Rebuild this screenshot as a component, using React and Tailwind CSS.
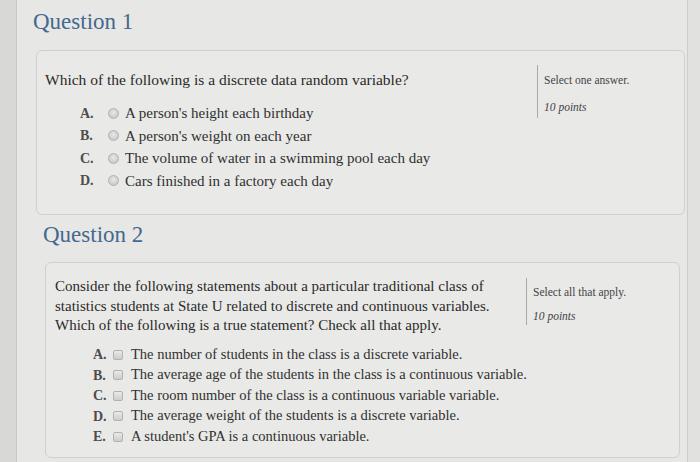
const q1Options = [
  { letter: 'A.', text: "A person's height each birthday" },
  { letter: 'B.', text: "A person's weight on each year" },
  { letter: 'C.', text: 'The volume of water in a swimming pool each day' },
  { letter: 'D.', text: 'Cars finished in a factory each day' },
];

const q2Options = [
  { letter: 'A.', text: 'The number of students in the class is a discrete variable.' },
  { letter: 'B.', text: 'The average age of the students in the class is a continuous variable.' },
  { letter: 'C.', text: 'The room number of the class is a continuous variable variable.' },
  { letter: 'D.', text: 'The average weight of the students is a discrete variable.' },
  { letter: 'E.', text: "A student's GPA is a continuous variable." },
];

function Radio() {
  return (
    <span className="inline-block w-[11px] h-[11px] rounded-full border border-[#b2b2b0] bg-[radial-gradient(circle_at_50%_40%,#e8e8e6_0%,#d2d2d0_55%,#bdbdbb_100%)] shrink-0" />
  );
}

function Check() {
  return (
    <span className="inline-block w-[10px] h-[10px] rounded-[2px] border border-[#b2b2b0] bg-[linear-gradient(#e9e9e7,#cdcdcb)] shrink-0" />
  );
}

function Side({ top, label, pt, gap, h }) {
  return (
    <div className={`border-l border-[#a9a9a7] pl-[6px] ${top} ${h}`}>
      <div className={`text-[11.5px] leading-[14px] text-[#444] ${pt}`}>{label}</div>
      <div className={`text-[11.5px] leading-[14px] italic text-[#444] ${gap}`}>10 points</div>
    </div>
  );
}

export default function App() {
  return (
    <div className="w-[700px] h-[462px] flex overflow-hidden bg-[#e4e4e2] font-['Liberation_Serif','Times_New_Roman',serif]">
      <div className="w-[17px] shrink-0 bg-[#d8d8d6] border-r border-[#c8c8c6]" />

      <div className="w-[670px] shrink-0 bg-[#e7e7e5] flex flex-col">
        {/* Question 1 */}
        <h2 className="pl-[16px] pt-[8px] text-[23px] leading-[28px] text-[#44698f]">Question 1</h2>
        <div className="mt-[14px] ml-[19px] w-[649px] h-[165px] shrink-0 rounded-[6px] border border-[#d0d0ce] bg-[#e9e9e7] flex">
          <div className="flex-1 min-w-0 pl-[8px] pt-[19px]">
            <div className="text-[15.5px] leading-[20px] text-[#2a2a2a] whitespace-nowrap">Which of the following is a discrete data random variable?</div>
            <div className="mt-[12px] pl-[35px] flex flex-col">
              {q1Options.map(o => (
                <div key={o.letter} className="flex items-center h-[22.5px] text-[15px] whitespace-nowrap">
                  <span className="w-[28px] shrink-0 font-bold text-[#4d4d4d] text-[14px]">{o.letter}</span>
                  <Radio />
                  <span className="ml-[6px] text-[#303030]">{o.text}</span>
                </div>
              ))}
            </div>
          </div>
          <div className="w-[147px] shrink-0">
            <Side top="mt-[14px]" h="h-[53px]" label="Select one answer." pt="pt-[8px]" gap="mt-[13px]" />
          </div>
        </div>

        {/* Question 2 */}
        <h2 className="pl-[26px] mt-[6px] text-[23px] leading-[28px] text-[#44698f]">Question 2</h2>
        <div className="mt-[13px] ml-[28px] w-[635px] h-[196px] shrink-0 rounded-[6px] border border-[#d0d0ce] bg-[#e9e9e7] flex">
          <div className="flex-1 min-w-0 pl-[9px] pt-[14px]">
            <div className="text-[15px] leading-[19.5px] text-[#2a2a2a] whitespace-nowrap">
              Consider the following statements about a particular traditional class of<br />
              statistics students at State U related to discrete and continuous variables.<br />
              Which of the following is a true statement? Check all that apply.
            </div>
            <div className="mt-[9px] pl-[38px] flex flex-col">
              {q2Options.map(o => (
                <div key={o.letter} className="flex items-center h-[20.5px] text-[14.5px] whitespace-nowrap">
                  <span className="w-[20px] shrink-0 font-bold text-[#4d4d4d] text-[14px]">{o.letter}</span>
                  <Check />
                  <span className="ml-[8px] text-[#303030]">{o.text}</span>
                </div>
              ))}
            </div>
          </div>
          <div className="w-[153px] shrink-0">
            <Side top="mt-[15px]" h="h-[47px]" label="Select all that apply." pt="pt-[7px]" gap="mt-[10px]" />
          </div>
        </div>
      </div>

      <div className="flex-1 bg-[#e1e1df] border-l border-[#cdcdcb]" />
    </div>
  );
}
